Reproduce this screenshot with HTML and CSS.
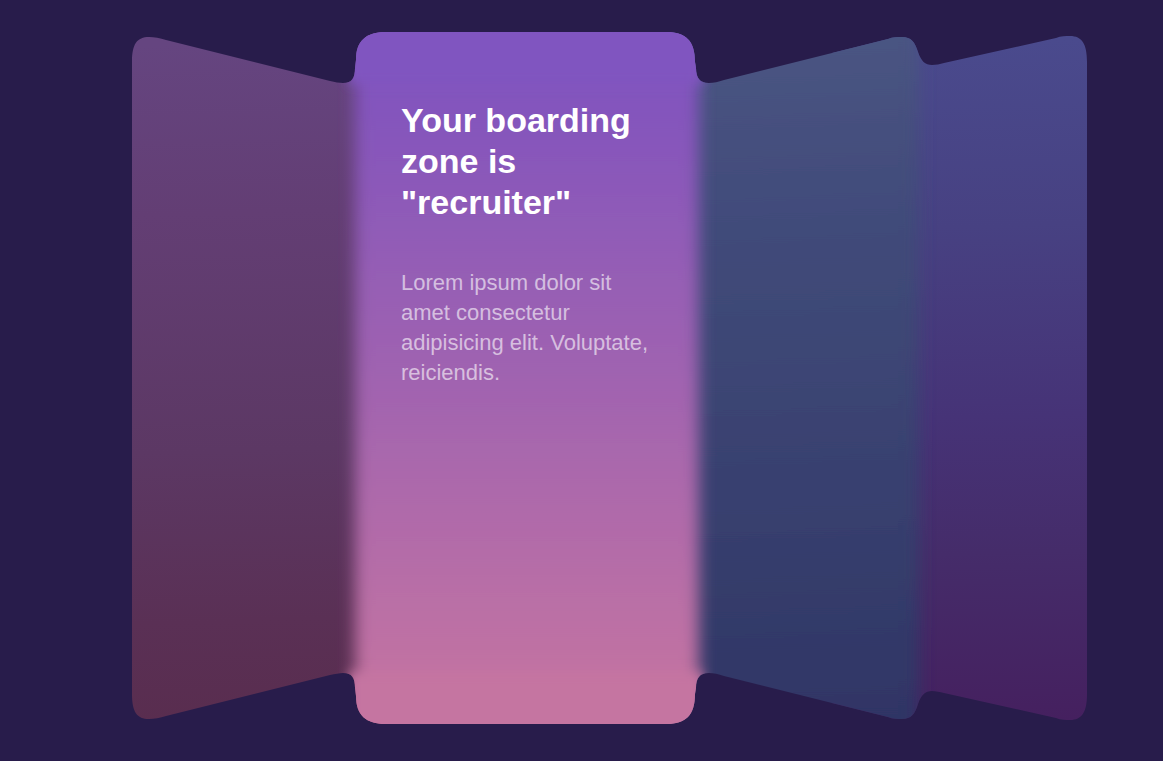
FILE: index.html
```
<!DOCTYPE html>
<html lang="en">
<head>
    <meta charset="UTF-8">
    <meta name="viewport" content="width=device-width, initial-scale=1.0">
    <title>Boarding zone</title>
    <link rel="stylesheet" href="styles.css">
</head>
<body>

<main class="panels">
    <svg class="panels-bg" viewBox="0 0 955 692" preserveAspectRatio="none" aria-hidden="true">
        <defs>
            <!-- top half of the outline, mirrored for the bottom -->
            <path id="half" d="M0,350 V30 C0,12 5,5 17,5 C22,5 28,6 34,8 L198,49 C203,50 207,51 211,51 C220,51 223,46 223,36 L224,28 C224,9 234,0 254,0 H534 C554,0 563,9 563,30 L564,36 C564,46 568,51 577,51 C582,51 586,50 592,48 L756,7 C761,5 766,5 770,5 C779,5 783,10 786,20 C789,29 793,33 800,33 C804,33 808,32 812,31 L924,6 C929,4 934,4 938,4 C950,4 955,12 955,30 V350 Z"/>
            <clipPath id="outline">
                <use href="#half"/>
                <use href="#half" transform="translate(0 692) scale(1 -1)"/>
            </clipPath>
            <linearGradient id="plum" gradientUnits="userSpaceOnUse" x1="110" y1="10" x2="130" y2="690">
                <stop offset="0" stop-color="#654580"/>
                <stop offset="0.25" stop-color="#633e74"/>
                <stop offset="0.6" stop-color="#5c3864"/>
                <stop offset="0.85" stop-color="#5a3055"/>
                <stop offset="1" stop-color="#592d4f"/>
            </linearGradient>
            <linearGradient id="active" x1="0" y1="0" x2="0" y2="1">
                <stop offset="0" stop-color="#8055c1"/>
                <stop offset="0.12" stop-color="#8455bc"/>
                <stop offset="0.5" stop-color="#a063b0"/>
                <stop offset="1" stop-color="#c775a0"/>
            </linearGradient>
            <linearGradient id="steel" gradientUnits="userSpaceOnUse" x1="660" y1="10" x2="690" y2="690">
                <stop offset="0" stop-color="#495482"/>
                <stop offset="0.3" stop-color="#404a79"/>
                <stop offset="0.7" stop-color="#373f6e"/>
                <stop offset="1" stop-color="#2f3565"/>
            </linearGradient>
            <linearGradient id="indigo" gradientUnits="userSpaceOnUse" x1="860" y1="10" x2="880" y2="690">
                <stop offset="0" stop-color="#4a4a8d"/>
                <stop offset="0.27" stop-color="#474182"/>
                <stop offset="0.55" stop-color="#463377"/>
                <stop offset="0.75" stop-color="#452c6a"/>
                <stop offset="1" stop-color="#45205f"/>
            </linearGradient>
            <filter id="soft" x="-20%" y="0" width="140%" height="100%">
                <feGaussianBlur stdDeviation="8 0"/>
            </filter>
            <filter id="soft-corner" x="-10%" y="-60%" width="120%" height="220%">
                <feGaussianBlur stdDeviation="6"/>
            </filter>
        </defs>
        <g clip-path="url(#outline)">
            <rect width="300" height="692" fill="url(#plum)"/>
            <rect x="700" width="255" height="692" fill="url(#indigo)"/>
            <rect x="500" width="287" height="692" fill="url(#steel)" filter="url(#soft)"/>
            <rect x="223" width="344" height="692" fill="url(#active)" filter="url(#soft)"/>
            <!-- the active card keeps a crisp edge above and below the folds -->
            <rect x="217" y="-20" width="353" height="72" fill="#8055c0" filter="url(#soft-corner)"/>
            <rect x="217" y="640" width="353" height="72" fill="#c574a1" filter="url(#soft-corner)"/>
        </g>
    </svg>

    <section class="card">
        <h1>Your boarding zone is "recruiter"</h1>
        <p>Lorem ipsum dolor sit amet consectetur adipisicing elit. Voluptate, reiciendis.</p>
    </section>
</main>

</body>
</html>
```
FILE: styles.css
```
* {
    box-sizing: border-box;
}
body {
    font-family: "Liberation Sans", Arial, sans-serif;
    background-color: #281c4b;
    margin: 0;
    min-height: 100vh;
    padding: 32px 76px 37px 132px;
    display: flex;
}
.panels {
    position: relative;
    flex: 1;
    display: grid;
    grid-template-columns: 224fr 339fr 224fr 168fr;
}
.panels-bg {
    position: absolute;
    inset: 0;
    width: 100%;
    height: 100%;
}
.card {
    position: relative;
    grid-column: 2;
    padding: 68px 45px;
}
h1 {
    margin: 0;
    font-size: 34px;
    line-height: 41px;
    color: #fff;
}
p {
    margin: 45px 0 0;
    font-size: 22px;
    line-height: 30px;
    color: rgba(255, 255, 255, 0.6);
}
```
